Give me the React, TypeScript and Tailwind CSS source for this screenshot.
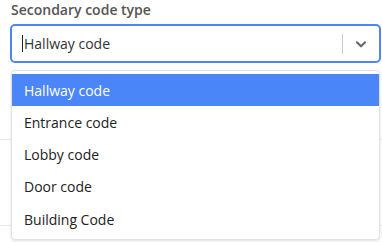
import React from "react";

const options = ["Hallway code", "Entrance code", "Lobby code", "Door code", "Building Code"];

export default function App() {
  const selected = 0;

  return (
    <div className="relative w-[382px] h-[242px] bg-white overflow-hidden font-['Open_Sans',sans-serif]">
      {/* field label */}
      <div className="pl-[11px] pt-0 text-[14px] leading-[20px] font-semibold text-[#555]">
        Secondary code type
      </div>

      {/* select control */}
      <div className="ml-[10px] mt-[4px] w-[371px] h-[39px] flex items-center border-2 border-[#4a86f7] rounded-[5px]">
        <div className="flex-1 flex items-center pl-[10px] text-[14px] text-[#333]">
          <span className="w-px h-[17px] bg-[#222] mr-[1px]" />
          Hallway code
        </div>
        <span className="w-px h-[20px] bg-[#ccc]" />
        <div className="w-[36px] flex items-center justify-center">
          <svg width="14" height="14" viewBox="0 0 24 24" fill="none" stroke="#666" strokeWidth="3.5" strokeLinecap="round" strokeLinejoin="round">
            <path d="M5 9l7 7 7-7" />
          </svg>
        </div>
      </div>

      {/* page content under the menu */}
      <div className="mt-[76px] border-b border-[#eaeaea]" />
      <div className="mt-[85px] border-b border-[#eaeaea]" />

      {/* dropdown menu */}
      <div className="absolute left-[11px] top-[70px] w-[369px] h-[170px] bg-white border border-[#e2e2e2] rounded-[4px] shadow-[0_1px_3px_rgba(0,0,0,0.12)] pt-[3px]">
        {options.map((opt, i) => (
          <div
            key={opt}
            className={`h-[32.25px] flex items-center pl-[12px] text-[14px] ${
              i === selected ? "bg-[#4a86f8] text-white" : "text-[#222]"
            }`}
          >
            {opt}
          </div>
        ))}
      </div>
    </div>
  );
}
